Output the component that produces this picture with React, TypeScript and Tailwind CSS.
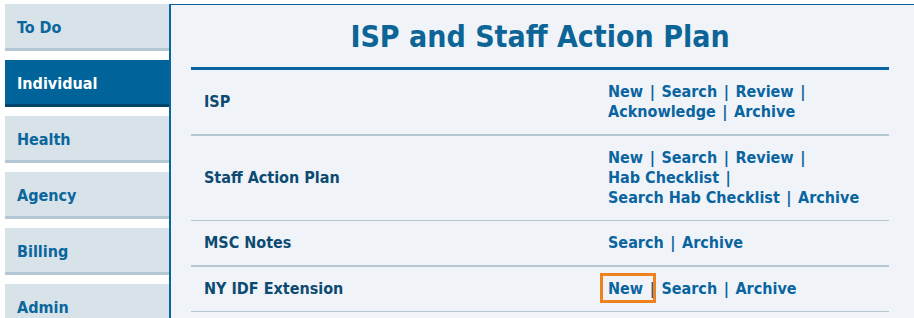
import React from 'react';

const navItems = ['To Do', 'Individual', 'Health', 'Agency', 'Billing', 'Admin'];

type Row = {
    label: string;
    lines: string[][];
    border: string;
    highlightFirst?: boolean;
};

const rows: Row[] = [
    { label: 'ISP', lines: [['New', 'Search', 'Review', ''], ['Acknowledge', 'Archive']], border: 'border-b-2' },
    {
        label: 'Staff Action Plan',
        lines: [['New', 'Search', 'Review', ''], ['Hab Checklist', ''], ['Search Hab Checklist', 'Archive']],
        border: 'border-b',
    },
    { label: 'MSC Notes', lines: [['Search', 'Archive']], border: 'border-b-2' },
    { label: 'NY IDF Extension', lines: [['New', 'Search', 'Archive']], border: 'border-b', highlightFirst: true },
];

const LinkLine: React.FC<{ items: string[]; highlightFirst?: boolean }> = ({ items, highlightFirst }) => (
    <div className="whitespace-nowrap">
        {items.map((item, i) => (
            <React.Fragment key={i}>
                {i > 0 && (
                    <>
                        {' '}
                        <span className="mx-[1.5px]">|</span>
                        {item !== '' && ' '}
                    </>
                )}
                {item !== '' && (
                    <a href="#" className="relative text-[#0a64a0]">
                        {item}
                        {highlightFirst && i === 0 && (
                            <span className="absolute left-[-8px] top-[-6px] w-[56px] h-[30px] border-[3px] border-[#f0821e]" />
                        )}
                    </a>
                )}
            </React.Fragment>
        ))}
    </div>
);

const App: React.FC = () => {
    return (
        <div
            className="w-[914px] h-[318px] overflow-hidden bg-white flex pt-[4px] pl-[5px]"
            style={{ fontFamily: '"DejaVu Sans Condensed", "DejaVu Sans", Verdana, sans-serif' }}
        >
            <div className="w-[165px] shrink-0 flex flex-col gap-[9px]">
                {navItems.map(name => {
                    const active = name === 'Individual';
                    return (
                        <div
                            key={name}
                            className={
                                active
                                    ? 'h-[47px] shrink-0 flex items-center pl-[12px] pt-[3px] bg-[#00649a] border-b-[3px] border-[#004569] text-white font-bold text-[16px]'
                                    : 'h-[47px] shrink-0 flex items-center pl-[12px] pt-[3px] bg-[#d7e2e9] border-b-[3px] border-[#b4c8d4] text-[#0a669d] font-bold text-[16px]'
                            }
                        >
                            {name}
                        </div>
                    );
                })}
            </div>

            <div className="w-[760px] shrink-0 -ml-[1px] bg-[#f0f4f8] border-l-2 border-t border-[#0a64a0] pl-[20px] pr-[40px]">
                <h1 className="text-center text-[30px] leading-[32px] font-bold text-[#0c6497] pt-[16px] pb-[14px] border-b-[3px] border-[#0a64a0]">
                    ISP and Staff Action Plan
                </h1>
                {rows.map(row => (
                    <div
                        key={row.label}
                        className={`grid grid-cols-[404px_1fr] items-center pl-[13px] py-[12px] border-[#b4c6d2] ${row.border}`}
                    >
                        <div className="text-[16px] leading-[20px] font-bold text-[#0d4a72]">{row.label}</div>
                        <div className="text-[16px] leading-[20px] font-bold text-[#0a64a0]">
                            {row.lines.map((line, i) => (
                                <LinkLine key={i} items={line} highlightFirst={row.highlightFirst && i === 0} />
                            ))}
                        </div>
                    </div>
                ))}
            </div>
        </div>
    );
};

export default App;
